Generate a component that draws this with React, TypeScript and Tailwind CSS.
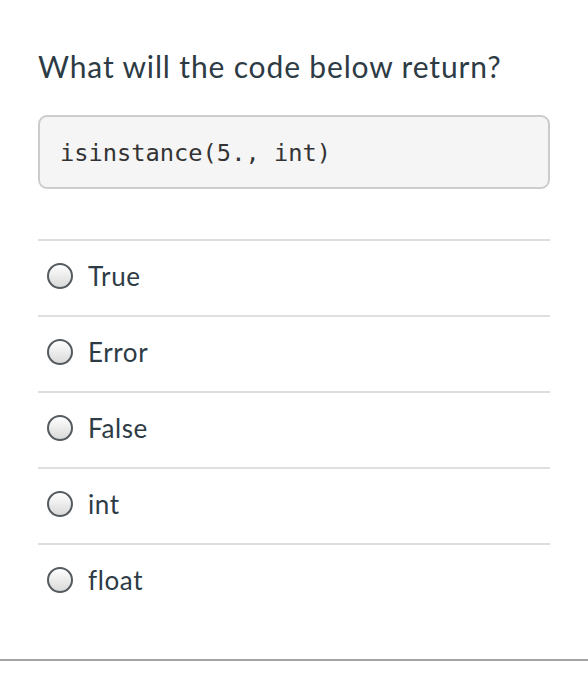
const options = ["True", "Error", "False", "int", "float"];

function Radio() {
  return (
    <span className="block h-[26px] w-[26px] shrink-0 rounded-full border-2 border-[#555a5e] bg-gradient-to-b from-white to-[#d9d9d9]" />
  );
}

export default function App() {
  return (
    <div className="min-h-[674px] bg-white font-['Lato','Noto_Sans',sans-serif]">
      <div className="px-[38px] pt-[48px]">
        <h1 className="text-[30px] font-normal leading-[36px] tracking-[0.85px] text-[#2d3b45]">
          What will the code below return?
        </h1>

        <div className="mt-[31px] flex h-[74px] items-center rounded-[9px] border-2 border-[#cccccc] bg-[#f5f5f5] px-[20px] pt-[4px]">
          <code className="font-['DejaVu_Sans_Mono',monospace] text-[23.7px] text-[#333333]">
            isinstance(5., int)
          </code>
        </div>

        <ul className="mt-[50px]">
          {options.map((opt) => (
            <li
              key={opt}
              className="flex h-[76px] items-center gap-[15px] border-t-2 border-[#dedede] pb-1 pl-[9px]"
            >
              <Radio />
              <span className="text-[26px] leading-none tracking-[0.6px] text-[#2d3b45]">{opt}</span>
            </li>
          ))}
        </ul>
      </div>
      <div className="mt-[40px] h-[2px] w-full bg-[#a3a3a3]" />
    </div>
  );
}
